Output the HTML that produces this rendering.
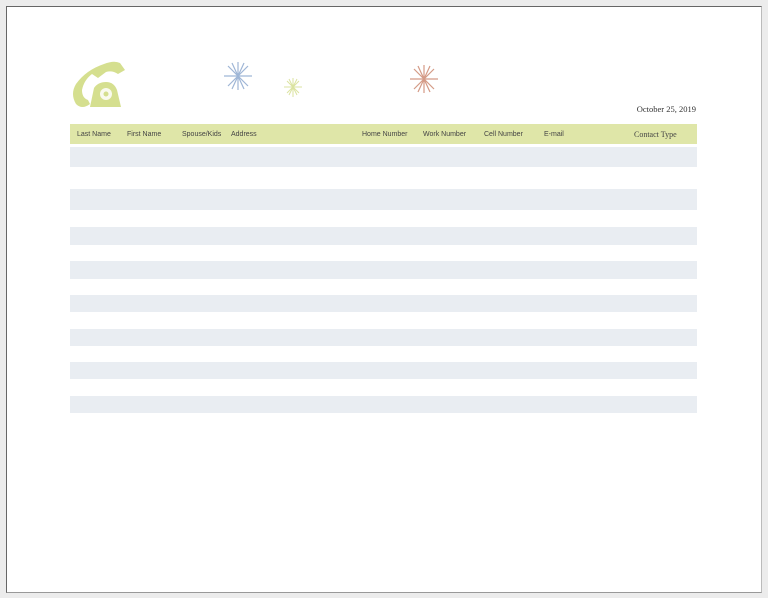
<!DOCTYPE html>
<html><head><style>
body{margin:0;width:768px;height:598px;background:#ececec;position:relative;overflow:hidden;font-family:"Liberation Sans",sans-serif}
.page{position:absolute;left:6px;top:6px;width:756px;height:587px;background:#fff;border-left:1px solid #666;border-top:1px solid #666;border-right:1px solid #bbb;border-bottom:1px solid #999;box-sizing:border-box}
.bar{position:absolute;left:70px;width:627px}
.hdr{top:124px;height:20px;background:#dfe6a8}
.row{background:#e9edf2}
.h{position:absolute;top:131px;font-size:7px;color:#444}
.date{position:absolute;right:72px;top:104px;font-family:"Liberation Serif",serif;font-size:8.5px;color:#333}
</style></head><body>
<div class="page"></div>
<div class="bar hdr"></div>
<div class="bar row" style="top:147px;height:20px"></div>
<div class="bar row" style="top:189px;height:21px"></div>
<div class="bar row" style="top:227px;height:18px"></div>
<div class="bar row" style="top:261px;height:18px"></div>
<div class="bar row" style="top:295px;height:17px"></div>
<div class="bar row" style="top:329px;height:17px"></div>
<div class="bar row" style="top:362px;height:17px"></div>
<div class="bar row" style="top:396px;height:17px"></div>
<span class="h" style="left:77px">Last Name</span>
<span class="h" style="left:127px">First Name</span>
<span class="h" style="left:182px">Spouse/Kids</span>
<span class="h" style="left:231px">Address</span>
<span class="h" style="left:362px">Home Number</span>
<span class="h" style="left:423px">Work Number</span>
<span class="h" style="left:484px">Cell Number</span>
<span class="h" style="left:544px">E-mail</span>
<span class="h" style="left:634px;top:130px;font-family:'Liberation Serif',serif;font-size:8px">Contact Type</span>
<div class="date">October 25, 2019</div>
<svg style="position:absolute;left:0;top:0" width="768" height="200">
<g fill="#d5df8f">
<path d="M76 104 Q70 94 76 84 Q86 70 104 64 Q114 60 120 63 L125 70 L118 74 Q112 70 106 72 L98 78 L92 74 Q84 80 82 90 Q82 98 88 100 L90 104 Q82 110 76 104Z"/>
<path d="M90 107 L94 88 Q98 82 106 82 Q114 82 117 90 L121 107 Z"/>
</g>
<circle cx="106" cy="94" r="6" fill="#fff" opacity=".85"/>
<circle cx="106" cy="94" r="2.5" fill="#d5df8f"/>
<g stroke="#9fb6d6" stroke-width="1.2"><line x1="238" y1="62" x2="238" y2="90"/><line x1="224" y1="76" x2="252" y2="76"/><line x1="228" y1="66" x2="248" y2="86"/><line x1="248" y1="66" x2="228" y2="86"/><line x1="232" y1="63" x2="244" y2="89"/><line x1="244" y1="63" x2="232" y2="89"/></g>
<g stroke="#dbe3a0" stroke-width="1"><line x1="293" y1="78" x2="293" y2="97"/><line x1="284" y1="87" x2="302" y2="87"/><line x1="287" y1="81" x2="299" y2="93"/><line x1="299" y1="81" x2="287" y2="93"/><line x1="289" y1="79" x2="297" y2="95"/><line x1="297" y1="79" x2="289" y2="95"/></g>
<g stroke="#d49a86" stroke-width="1.2"><line x1="424" y1="65" x2="424" y2="93"/><line x1="410" y1="79" x2="438" y2="79"/><line x1="414" y1="69" x2="434" y2="89"/><line x1="434" y1="69" x2="414" y2="89"/><line x1="418" y1="66" x2="430" y2="92"/><line x1="430" y1="66" x2="418" y2="92"/></g>
</svg>
</body></html>
